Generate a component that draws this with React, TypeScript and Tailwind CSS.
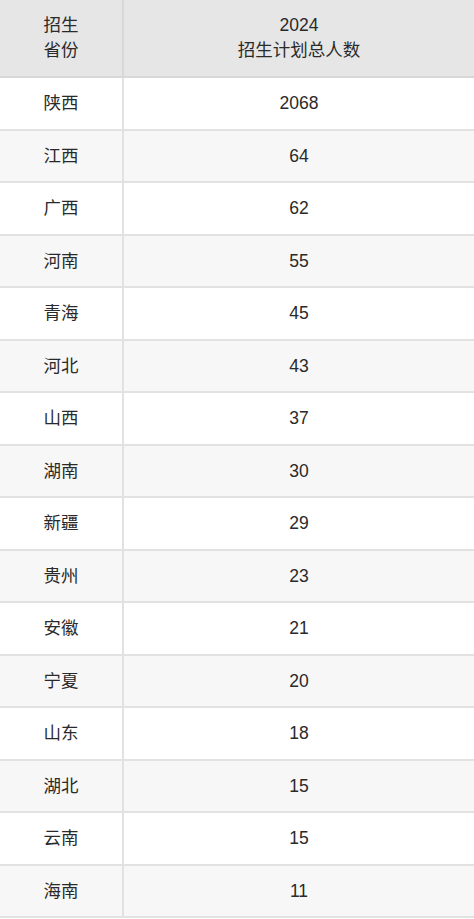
const rows: [string, string][] = [
  ['陕西', '2068'],
  ['江西', '64'],
  ['广西', '62'],
  ['河南', '55'],
  ['青海', '45'],
  ['河北', '43'],
  ['山西', '37'],
  ['湖南', '30'],
  ['新疆', '29'],
  ['贵州', '23'],
  ['安徽', '21'],
  ['宁夏', '20'],
  ['山东', '18'],
  ['湖北', '15'],
  ['云南', '15'],
  ['海南', '11'],
];

export default function App() {
  return (
    <div
      className="w-[474px] h-[919px] overflow-hidden bg-white text-[17.5px] text-[#2a2a2a]"
      style={{ fontFamily: '"Liberation Sans", "Noto Sans CJK SC", sans-serif' }}
    >
      {/* header */}
      <div className="grid grid-cols-[124px_1fr] h-[78px] bg-[#e6e6e6] border-b-2 border-[#d8d8d8]">
        <div className="flex flex-col items-center justify-center leading-[25px] border-r-2 border-[#d8d8d8]">
          <span>招生</span>
          <span>省份</span>
        </div>
        <div className="flex flex-col items-center justify-center leading-[25px]">
          <span>2024</span>
          <span>招生计划总人数</span>
        </div>
      </div>

      {rows.map(([prov, n], i) => (
        <div
          key={prov + i}
          className={`grid grid-cols-[124px_1fr] h-[52.5px] border-b-2 border-[#e2e2e2] ${
            i % 2 === 0 ? 'bg-white' : 'bg-[#f7f7f7]'
          }`}
        >
          <div className="flex items-center justify-center border-r-2 border-[#e2e2e2]">{prov}</div>
          <div className="flex items-center justify-center">{n}</div>
        </div>
      ))}
    </div>
  );
}
